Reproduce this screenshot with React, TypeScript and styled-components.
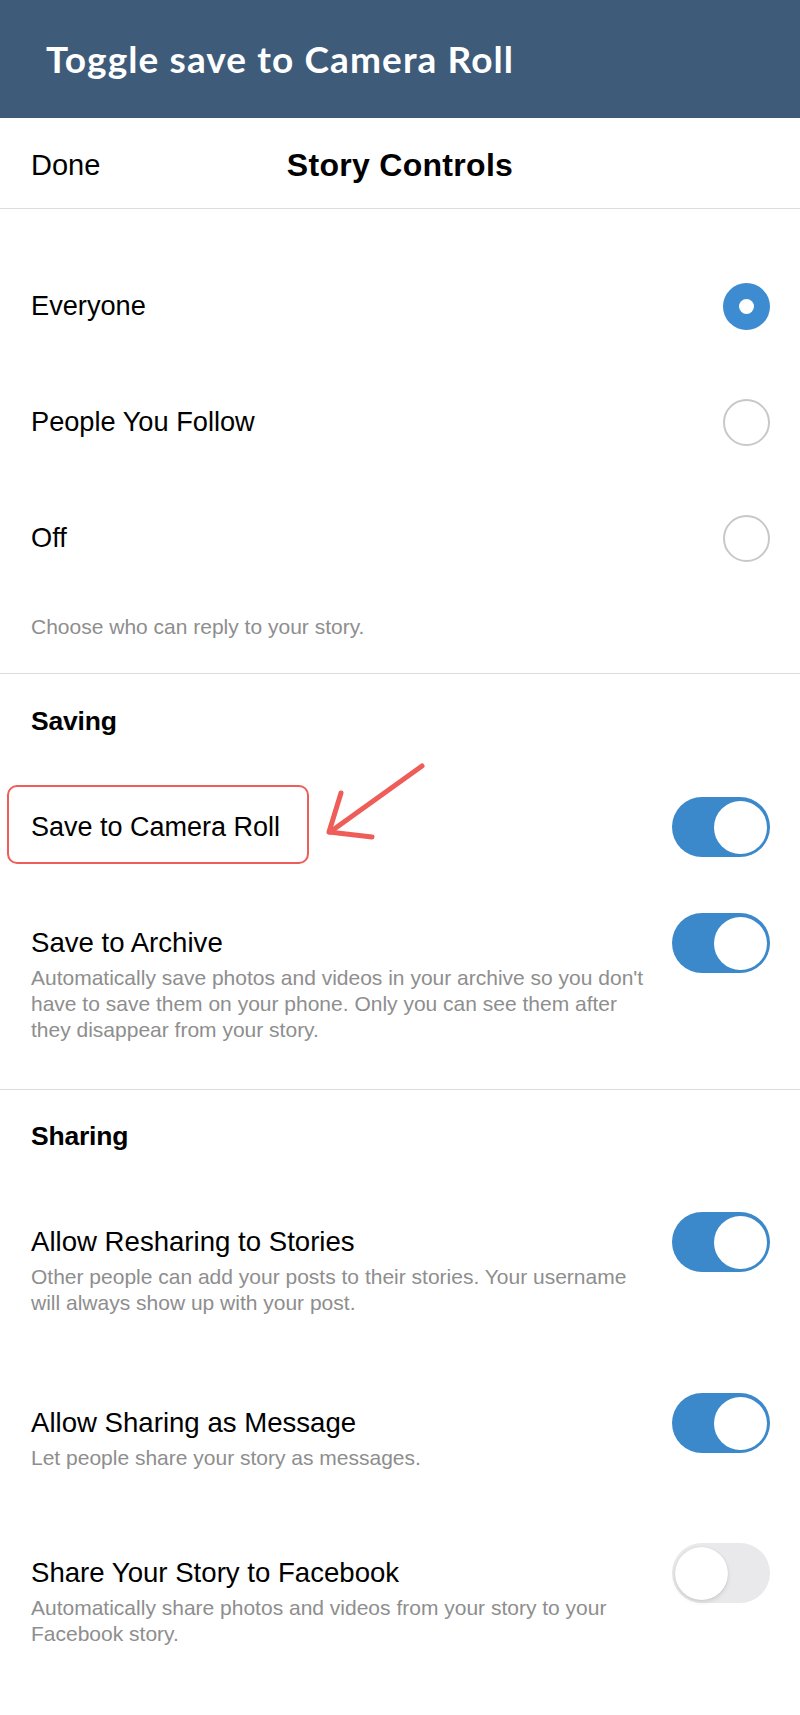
import React from "react";
import styled, { createGlobalStyle } from "styled-components";

const GlobalStyle = createGlobalStyle`
  html, body {
    margin: 0;
    padding: 0;
    background: #ffffff;
  }
  body {
    font-family: "Liberation Sans", Arial, sans-serif;
    color: #000;
    -webkit-font-smoothing: antialiased;
  }
  * { box-sizing: border-box; }
`;

const Page = styled.div`
  width: 800px;
  min-height: 1715px;
  background: #fff;
  display: flex;
  flex-direction: column;
`;

const Banner = styled.header`
  height: 118px;
  background: #3e5b7a;
  display: flex;
  align-items: center;
  padding-left: 46px;
`;

const BannerTitle = styled.h1`
  margin: 0;
  color: #ffffff;
  font-family: "Lato", "Open Sans", sans-serif;
  font-weight: 700;
  font-size: 37px;
  letter-spacing: 1.1px;
  line-height: 1;
  padding-bottom: 2px;
`;

const NavBar = styled.nav`
  height: 91px;
  display: grid;
  grid-template-columns: 1fr auto 1fr;
  align-items: center;
  padding: 4px 31px 0;
  border-bottom: 1px solid #dcdcdc;
`;

const NavAction = styled.span`
  font-size: 29px;
  color: #000;
  justify-self: start;
`;

const NavTitle = styled.span`
  font-size: 32px;
  font-weight: 700;
  letter-spacing: 0.3px;
`;

const Section = styled.section<{ $top: number; $bottom: number; $divider?: boolean }>`
  padding: ${(p) => p.$top}px 31px ${(p) => p.$bottom}px;
  border-bottom: ${(p) => (p.$divider ? "1px solid #dcdcdc" : "none")};
  display: flex;
  flex-direction: column;
`;

const OptionRow = styled.label`
  height: 116px;
  display: flex;
  align-items: center;
  justify-content: space-between;
  font-size: 27.2px;
`;

const Radio = styled.span<{ $checked?: boolean }>`
  width: 47px;
  height: 47px;
  border-radius: 50%;
  margin-right: -1px;
  border: ${(p) => (p.$checked ? "none" : "2px solid #c8c8c8")};
  background: ${(p) => (p.$checked ? "#3d8bd0" : "#fff")};
  display: flex;
  align-items: center;
  justify-content: center;
  &::after {
    content: "";
    width: 15px;
    height: 15px;
    border-radius: 50%;
    background: #fff;
    display: ${(p) => (p.$checked ? "block" : "none")};
  }
`;

const Hint = styled.p<{ $mt?: number }>`
  margin: ${(p) => p.$mt ?? 0}px 0 0;
  font-size: 21px;
  line-height: 26px;
  color: #8e8e8e;
  white-space: nowrap;
`;

const SectionTitle = styled.h2`
  margin: 0;
  font-size: 26.5px;
  font-weight: 700;
  line-height: 32px;
  letter-spacing: -0.2px;
`;

const SettingRow = styled.div<{ $mt: number }>`
  position: relative;
  margin-top: ${(p) => p.$mt}px;
  display: grid;
  grid-template-columns: 1fr auto;
  column-gap: 20px;
  align-items: center;
`;

const SettingTitle = styled.div`
  font-size: 27.6px;
  line-height: 60px;
  grid-column: 1;
  grid-row: 1;
`;

const SettingDesc = styled(Hint)`
  grid-column: 1;
  grid-row: 2;
  margin-top: -8px;
`;

const Highlight = styled.span`
  position: relative;
  display: inline-block;
  font-size: 27px;
  &::after {
    content: "";
    position: absolute;
    top: -12px;
    bottom: -7px;
    left: -24px;
    right: -29px;
    border: 2px solid #ef5d58;
    border-radius: 10px;
    pointer-events: none;
  }
`;

const Toggle = styled.span<{ $on?: boolean }>`
  grid-column: 2;
  grid-row: 1;
  width: 98px;
  height: 60px;
  border-radius: 30px;
  margin-right: -1px;
  background: ${(p) => (p.$on ? "#3b88cb" : "#e9e9eb")};
  display: flex;
  align-items: center;
  justify-content: ${(p) => (p.$on ? "flex-end" : "flex-start")};
  padding: 0 3px;
  &::after {
    content: "";
    width: 53px;
    height: 53px;
    border-radius: 50%;
    background: #fff;
    box-shadow: ${(p) =>
      p.$on ? "none" : "0 2px 4px rgba(0,0,0,0.12), 0 0 1px rgba(0,0,0,0.15)"};
  }
`;

const ArrowMark = styled.svg`
  position: absolute;
  left: 289px;
  top: -41px;
  width: 110px;
  height: 90px;
  overflow: visible;
  pointer-events: none;
`;

type Setting = {
  title: string;
  desc?: string[];
  on: boolean;
  mt: number;
};

const savingSettings: Setting[] = [
  {
    title: "Save to Archive",
    desc: [
      "Automatically save photos and videos in your archive so you don't",
      "have to save them on your phone. Only you can see them after",
      "they disappear from your story.",
    ],
    on: true,
    mt: 56,
  },
];

const sharingSettings: Setting[] = [
  {
    title: "Allow Resharing to Stories",
    desc: [
      "Other people can add your posts to their stories. Your username",
      "will always show up with your post.",
    ],
    on: true,
    mt: 60,
  },
  {
    title: "Allow Sharing as Message",
    desc: ["Let people share your story as messages."],
    on: true,
    mt: 77,
  },
  {
    title: "Share Your Story to Facebook",
    desc: [
      "Automatically share photos and videos from your story to your",
      "Facebook story.",
    ],
    on: false,
    mt: 72,
  },
];

const options = ["Everyone", "People You Follow", "Off"];

const SettingItem: React.FC<{ s: Setting }> = ({ s }) => (
  <SettingRow $mt={s.mt}>
    <SettingTitle>{s.title}</SettingTitle>
    <Toggle $on={s.on} />
    {s.desc && (
      <SettingDesc>
        {s.desc.map((line, i) => (
          <React.Fragment key={i}>
            {line}
            {i < s.desc!.length - 1 && <br />}
          </React.Fragment>
        ))}
      </SettingDesc>
    )}
  </SettingRow>
);

export default function App() {
  return (
    <>
      <GlobalStyle />
      <Page>
        <Banner>
          <BannerTitle>Toggle save to Camera Roll</BannerTitle>
        </Banner>
        <NavBar>
          <NavAction>Done</NavAction>
          <NavTitle>Story Controls</NavTitle>
          <span />
        </NavBar>

        <Section $top={39} $bottom={33} $divider>
          {options.map((o, i) => (
            <OptionRow key={o}>
              <span>{o}</span>
              <Radio $checked={i === 0} />
            </OptionRow>
          ))}
          <Hint $mt={18}>Choose who can reply to your story.</Hint>
        </Section>

        <Section $top={31} $bottom={46} $divider>
          <SectionTitle>Saving</SectionTitle>
          <SettingRow $mt={60}>
            <SettingTitle>
              <Highlight>Save to Camera Roll</Highlight>
            </SettingTitle>
            <Toggle $on />
            <ArrowMark viewBox="0 0 110 90">
              <g
                stroke="#ef5d58"
                strokeWidth={5}
                strokeLinecap="round"
                strokeLinejoin="round"
                fill="none"
              >
                <line x1={102} y1={10} x2={10} y2={76} />
                <polyline points="21,37 9,76 52,81" />
              </g>
            </ArrowMark>
          </SettingRow>
          {savingSettings.map((s) => (
            <SettingItem key={s.title} s={s} />
          ))}
        </Section>

        <Section $top={30} $bottom={40}>
          <SectionTitle>Sharing</SectionTitle>
          {sharingSettings.map((s) => (
            <SettingItem key={s.title} s={s} />
          ))}
        </Section>
      </Page>
    </>
  );
}
